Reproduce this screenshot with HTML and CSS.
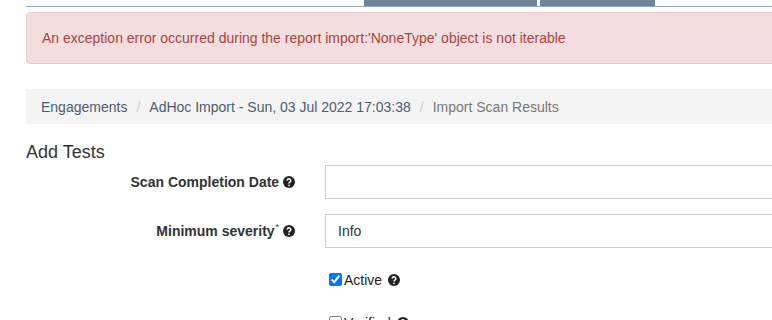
FILE: index.html
```html
<!DOCTYPE html>
<html lang="en">
<head>
    <meta charset="UTF-8">
    <meta name="viewport" content="width=device-width, initial-scale=1.0">
    <title>Import Scan Results</title>
    <link rel="stylesheet" href="styles.css">
</head>
<body>
    <div class="page">
        <div class="topnav">
            <span class="tab tab-wide"></span>
            <span class="tab tab-small"></span>
        </div>

        <div class="alert">An exception error occurred during the report import:'NoneType' object is not iterable</div>

        <ol class="crumbs">
            <li><a href="#">Engagements</a></li>
            <li><a href="#">AdHoc Import - Sun, 03 Jul 2022 17:03:38</a></li>
            <li class="current">Import Scan Results</li>
        </ol>

        <h3 class="title">Add Tests</h3>

        <form class="form">
            <div class="row">
                <label class="lbl" for="scan_date">Scan Completion Date
                    <svg class="help" viewBox="0 0 16 16"><circle cx="8" cy="8" r="8"/><path d="M5.6 6.1a2.4 2.4 0 1 1 3.6 2.1c-.9.5-1.2.9-1.2 1.8"/><circle class="dot" cx="8" cy="12.4" r="1.15"/></svg>
                </label>
                <div class="field"><input type="text" id="scan_date"></div>
            </div>
            <div class="row">
                <label class="lbl" for="min_sev">Minimum severity<sup>*</sup>
                    <svg class="help" viewBox="0 0 16 16"><circle cx="8" cy="8" r="8"/><path d="M5.6 6.1a2.4 2.4 0 1 1 3.6 2.1c-.9.5-1.2.9-1.2 1.8"/><circle class="dot" cx="8" cy="12.4" r="1.15"/></svg>
                </label>
                <div class="field">
                    <select id="min_sev">
                        <option>Info</option>
                        <option>Low</option>
                        <option>Medium</option>
                        <option>High</option>
                        <option>Critical</option>
                    </select>
                </div>
            </div>
            <div class="row check-row">
                <span></span>
                <label class="check"><input type="checkbox" checked>Active
                    <svg class="help" viewBox="0 0 16 16"><circle cx="8" cy="8" r="8"/><path d="M5.6 6.1a2.4 2.4 0 1 1 3.6 2.1c-.9.5-1.2.9-1.2 1.8"/><circle class="dot" cx="8" cy="12.4" r="1.15"/></svg>
                </label>
            </div>
            <div class="row check-row">
                <span></span>
                <label class="check"><input type="checkbox">Verified
                    <svg class="help" viewBox="0 0 16 16"><circle cx="8" cy="8" r="8"/><path d="M5.6 6.1a2.4 2.4 0 1 1 3.6 2.1c-.9.5-1.2.9-1.2 1.8"/><circle class="dot" cx="8" cy="12.4" r="1.15"/></svg>
                </label>
            </div>
        </form>
    </div>
</body>
</html>
```

FILE: styles.css
```css
html, body {
    margin: 0;
    overflow: hidden;
    background-color: #fff;
}
body {
    font-family: 'Liberation Sans', Arial, sans-serif;
    font-size: 14px;
    line-height: 20px;
    color: #333;
}
.page {
    margin-left: 26px;
    width: 820px;
}
.topnav {
    display: flex;
    gap: 3px;
    height: 6px;
    padding-left: 338px;
    border-bottom: 1px solid #97a6c2;
}
.tab {
    height: 6px;
    background-color: #6e8499;
}
.tab-wide {
    width: 173px;
}
.tab-small {
    width: 115px;
}
.alert {
    margin-top: 5px;
    padding: 15px;
    background-color: #f2dede;
    border: 1px solid #ebccd1;
    border-radius: 4px;
    color: #a94442;
}
.crumbs {
    list-style: none;
    display: flex;
    margin: 25px 0 0;
    padding: 8px 15px 7px;
    background-color: #f4f4f4;
}
.crumbs li + li::before {
    content: "/";
    padding: 0 9px 0 9px;
    color: #ccc;
}
.crumbs a {
    color: #4d5c70;
    text-decoration: none;
}
.crumbs .current {
    color: #777;
}
.title {
    margin: 18px 0 3px;
    font-size: 18px;
    font-weight: normal;
    line-height: 20px;
}
.row {
    display: grid;
    grid-template-columns: 269px 1fr;
    column-gap: 30px;
    margin-bottom: 15px;
}
.lbl {
    padding-top: 7px;
    text-align: right;
    font-weight: bold;
}
.lbl sup {
    font-size: 9px;
    line-height: 0;
    vertical-align: 6px;
    font-weight: normal;
    margin-left: 1px;
}
.help {
    width: 12px;
    height: 12px;
    margin-left: 0;
    vertical-align: -1px;
}
.help circle {
    fill: #222;
}
.help path {
    fill: none;
    stroke: #fff;
    stroke-width: 2;
}
.help .dot {
    fill: #fff;
}
.field input, .field select {
    display: block;
    box-sizing: border-box;
    width: 100%;
    height: 34px;
    padding: 6px 12px;
    border: 1px solid #ccc;
    border-radius: 0;
    background-color: #fff;
    font-family: inherit;
    font-size: 14px;
    color: #333;
    appearance: none;
}
.check-row {
    margin-bottom: 16px;
}
.check {
    padding-top: 7px;
    color: #222;
}
.check input {
    margin: 0 2px 0 4px;
    vertical-align: -1px;
}
.check .help {
    margin-left: 2px;
}
```
